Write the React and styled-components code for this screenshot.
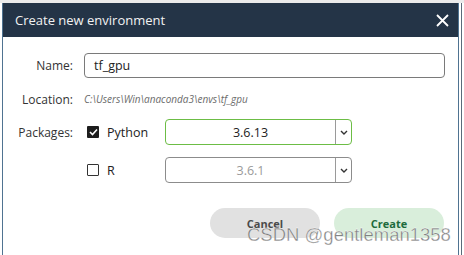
import React from "react";
import styled, { createGlobalStyle } from "styled-components";

const GlobalStyle = createGlobalStyle`
  html, body {
    margin: 0;
    padding: 0;
    background: #f4f4f4;
    font-family: "Open Sans", "Noto Sans", sans-serif;
    overflow: hidden;
  }
`;

const Page = styled.div`
  position: relative;
  width: 464px;
  height: 255px;
  padding: 3px 0 0 2px;
  box-sizing: border-box;
  display: flex;
  background: linear-gradient(#ebebeb, #ebebeb) 0 0 / 100% 3px no-repeat, #fff;
`;

const Dialog = styled.div`
  width: 457px;
  flex: none;
  background: #fff;
  border-left: 1px solid #4f7391;
  border-right: 1px solid #4f7391;
  box-sizing: border-box;
`;

const Edge = styled.div`
  flex: 1;
  border-right: 1px solid #5a6b7a;
  margin-right: 2px;
`;

const TitleBar = styled.div`
  height: 34px;
  background: #243447;
  display: flex;
  align-items: center;
  justify-content: space-between;
  padding: 0 9px 0 12px;
  color: #f2f2f2;
  font-size: 13px;
`;

const CloseButton = styled.svg`
  width: 13px;
  height: 13px;
  margin-top: 1px;
`;

const Body = styled.div`
  padding: 16px 13px 0 0;
  display: grid;
  grid-template-columns: 70px 1fr;
  column-gap: 11px;
  row-gap: 0;
  align-items: center;
`;

const Label = styled.div`
  justify-self: end;
  font-size: 12px;
  color: #333;
  height: ${({ h }) => h}px;
  display: flex;
  align-items: center;
  margin-top: ${({ mt }) => mt || 0}px;
`;

const TextInput = styled.div`
  height: 25px;
  box-sizing: border-box;
  border: 1px solid #7a7a7a;
  border-radius: 4px;
  padding-left: 9px;
  display: flex;
  align-items: center;
  font-size: 12.5px;
  color: #222;
`;

const Path = styled.div`
  font-size: 10px;
  font-style: italic;
  color: #6b6b6b;
  margin-top: ${({ mt }) => mt}px;
  height: 18px;
  display: flex;
  align-items: center;
`;

const PackageRow = styled.div`
  display: flex;
  align-items: center;
  height: 26px;
  margin-top: ${({ mt }) => mt}px;
`;

const Check = styled.div`
  width: 12px;
  height: 12px;
  box-sizing: border-box;
  margin-left: 3px;
  border-radius: 1px;
  border: ${({ checked }) => (checked ? "none" : "1.5px solid #333")};
  background: ${({ checked }) => (checked ? "#1d1d1d" : "#fff")};
  display: flex;
  align-items: center;
  justify-content: center;
`;

const PkgName = styled.div`
  width: 58px;
  padding-left: 8px;
  font-size: 12.5px;
  color: #222;
`;

const Select = styled.div`
  width: 187px;
  height: 26px;
  box-sizing: border-box;
  border: 1px solid ${({ active }) => (active ? "#6cbd45" : "#8c8c8c")};
  border-radius: 4px;
  display: flex;
  align-items: stretch;
  font-size: 12.5px;
  color: ${({ active }) => (active ? "#222" : "#9a9a9a")};
`;

const SelectValue = styled.div`
  flex: 1;
  display: flex;
  align-items: center;
  justify-content: center;
`;

const SelectArrow = styled.div`
  width: 15px;
  border-left: 1px solid #9a9a9a;
  display: flex;
  align-items: center;
  justify-content: center;
`;

const Footer = styled.div`
  display: flex;
  justify-content: flex-end;
  gap: 14px;
  padding: 25px 14px 0 0;
`;

const Button = styled.div`
  width: 110px;
  height: 30px;
  border-radius: 15px;
  display: flex;
  align-items: center;
  justify-content: center;
  font-size: 11px;
  font-weight: 700;
  background: ${({ primary }) => (primary ? "#d9eedb" : "#e1e1e1")};
  color: ${({ primary }) => (primary ? "#1d6b3c" : "#4a4a4a")};
`;

const Watermark = styled.div`
  position: absolute;
  left: 247px;
  top: 224px;
  font-family: "Liberation Sans", Arial, sans-serif;
  font-size: 18.5px;
  color: rgba(110, 110, 110, 0.85);
  -webkit-text-stroke: 0.3px #fff;
  white-space: nowrap;
`;

const Chevron = () => (
  <svg width="8" height="5" viewBox="0 0 8 5">
    <path d="M1 1l3 3 3-3" fill="none" stroke="#333" strokeWidth="1.4" />
  </svg>
);

export default function App() {
  return (
    <Page>
      <GlobalStyle />
      <Dialog>
        <TitleBar>
          <span>Create new environment</span>
          <CloseButton viewBox="0 0 13 13">
            <path d="M1 1l11 11M12 1L1 12" stroke="#fff" strokeWidth="1.8" />
          </CloseButton>
        </TitleBar>
        <Body>
          <Label h={25}>Name:</Label>
          <TextInput>tf_gpu</TextInput>
          <Label h={18} mt={12}>Location:</Label>
          <Path mt={12}>C:\Users\Win\anaconda3\envs\tf_gpu</Path>
          <Label h={26} mt={11}>Packages:</Label>
          <PackageRow mt={11}>
            <Check checked>
              <svg width="9" height="8" viewBox="0 0 9 8">
                <path d="M1 4l2.5 2.5L8 1.5" fill="none" stroke="#fff" strokeWidth="1.6" />
              </svg>
            </Check>
            <PkgName>Python</PkgName>
            <Select active>
              <SelectValue>3.6.13</SelectValue>
              <SelectArrow><Chevron /></SelectArrow>
            </Select>
          </PackageRow>
          <div />
          <PackageRow mt={12}>
            <Check />
            <PkgName>R</PkgName>
            <Select>
              <SelectValue>3.6.1</SelectValue>
              <SelectArrow><Chevron /></SelectArrow>
            </Select>
          </PackageRow>
        </Body>
        <Footer>
          <Button>Cancel</Button>
          <Button primary>Create</Button>
        </Footer>
      </Dialog>
      <Edge />
      <Watermark>CSDN @gentleman1358</Watermark>
    </Page>
  );
}
